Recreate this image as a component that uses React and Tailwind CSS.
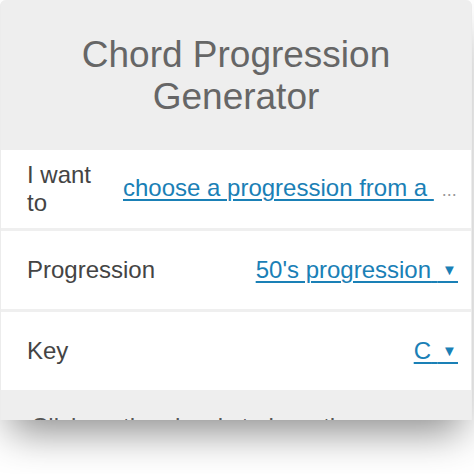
import React from 'react';

const LINK = 'text-[#1a80b6] underline decoration-[1.5px] underline-offset-[3px] whitespace-pre';

// Small filled triangle that sits inside the link so the underline runs under it
function Caret() {
  return (
    <>
      {' '}
      <span className="align-[3px] text-[15px]">{'\u00a0▼\u200a'}</span>
    </>
  );
}

function Row({ children }) {
  return (
    <div className="flex h-[78px] items-center bg-white pl-[26px] pr-[13px] text-[24px] leading-[28px] text-[#444]">
      {children}
    </div>
  );
}

export default function App() {
  return (
    <div className="h-[474px] w-[474px] overflow-hidden bg-white font-['Liberation_Sans',Arial,sans-serif]">
      <div className="h-[420px] w-[472px] overflow-hidden rounded-t-[6px] border-x border-[#ececec] bg-[#eeeeee] shadow-[0_22px_38px_-10px_rgba(0,0,0,0.45)]">
        <div className="pt-[34px] pb-[32px] text-center text-[37px] leading-[42px] text-[#666]">
          Chord Progression
          <br />
          Generator
        </div>

        <div className="flex flex-col gap-[3px] bg-[#efefef]">
          <Row>
            <span className="w-[80px] shrink-0">I want to</span>
            <span className="ml-[16px] flex min-w-0 flex-1 items-baseline whitespace-nowrap">
              <a className={LINK}>choose a progression from a </a>
              <span className="ml-[8px] text-[18px] text-[#999]">...</span>
            </span>
          </Row>
          <Row>
            <span>Progression</span>
            <a className={LINK + ' ml-auto'}>
              50's progression
              <Caret />
            </a>
          </Row>
          <Row>
            <span>Key</span>
            <a className={LINK + ' ml-auto'}>
              C
              <Caret />
            </a>
          </Row>
        </div>

        <div className="px-[30px] pt-[23px] text-[24px] leading-[28px] text-[#555]">
          Click on the chords to hear them played back
        </div>
      </div>
    </div>
  );
}
